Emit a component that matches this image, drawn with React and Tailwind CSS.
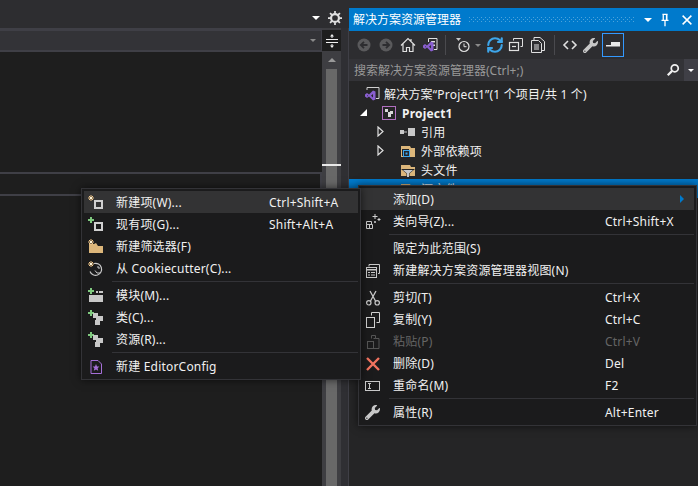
import { RefreshCw } from 'lucide-react'
import { FaWrench } from 'react-icons/fa'

const font = { fontFamily: '"Noto Sans", "Noto Sans CJK SC", sans-serif' }

function Icon({ children, className = '', size = 16 }) {
  return (
    <svg width={size} height={size} viewBox="0 0 16 16" fill="none" className={`shrink-0 ${className}`}>
      {children}
    </svg>
  )
}

const Spark = ({ x = 3, y = 3 }) => (
  <g stroke="#f0c78a" strokeWidth="1">
    <path d={`M${x} ${y - 3}v6M${x - 3} ${y}h6M${x - 2} ${y - 2}l4 4M${x + 2} ${y - 2}l-4 4`} />
    <rect x={x - 1} y={y - 1} width="2" height="2" fill="#fff3d6" stroke="none" />
  </g>
)
const Plus = () => <path d="M3 0v6M0 3h6" stroke="#7fc97f" strokeWidth="2" />
const Nodes = () => (
  <g fill="#c8c8c8">
    <rect x="5" y="3" width="5" height="5" />
    <rect x="10" y="6" width="5" height="5" />
    <rect x="7" y="10" width="5" height="5" />
    <rect x="8" y="7" width="3" height="4" />
  </g>
)

const icons = {
  newItem: (
    <Icon>
      <Spark />
      <rect x="7" y="6" width="7" height="7" stroke="#d0d0d0" strokeWidth="2" />
    </Icon>
  ),
  existing: (
    <Icon>
      <Plus />
      <rect x="7" y="6" width="7" height="7" stroke="#d0d0d0" strokeWidth="2" />
    </Icon>
  ),
  filter: (
    <Icon>
      <path d="M1 5h5l2-1 2 3h5v7H1z" fill="#dcb67a" />
      <Spark />
    </Icon>
  ),
  cookie: (
    <Icon>
      <path d="M6 2.500a6 6 0 1 1-4 8" stroke="#c8c8c8" strokeWidth="1.200" />
      <path d="M7 9.500l2 2.500h3M9 6h2v2" stroke="#c8c8c8" strokeWidth="1" />
      <Spark />
    </Icon>
  ),
  module: (
    <Icon>
      <Plus />
      <path d="M8 3h2v2H8zM11 3h4v2h-4zM1 7h14v7H1z" fill="#c8c8c8" />
    </Icon>
  ),
  cls: (
    <Icon>
      <Plus />
      <Nodes />
    </Icon>
  ),
  editorConfig: (
    <Icon>
      <path d="M3 1.500h7l3.500 3.500v9.500H3z" stroke="#a66fd8" strokeWidth="1" />
      <path d="M8 5l1 2.400 2.400.2-1.800 1.600.6 2.500L8 10.400l-2.200 1.300.6-2.500-1.800-1.600 2.400-.2z" fill="#a66fd8" />
    </Icon>
  ),
  wizard: (
    <Icon>
      <path d="M1.500 7.500h5v3h-5zM1.500 10.500h3v4h-3zM4.500 10.500h3v4h-3z" stroke="#c8c8c8" strokeWidth="1" />
      <path d="M10 0v5M7.500 2.500h5M14 4v3M12.500 5.500h3M10 7v2M9 8h2" stroke="#d0d0d0" strokeWidth="1" />
    </Icon>
  ),
  view: (
    <Icon>
      <path d="M4 3.500V1.500h10.500v9H13" stroke="#c8c8c8" strokeWidth="1" />
      <rect x="1.500" y="4.500" width="10" height="10" stroke="#c8c8c8" strokeWidth="1" />
      <path d="M2 6h9v1.500H2zM3 9h2v1H3zM6 9h4v1H6zM3 11.500h2v1H3zM6 11.500h4v1H6z" fill="#c8c8c8" />
    </Icon>
  ),
  cut: (
    <Icon>
      <path d="M11 1L5.500 11M5 1l5.500 10" stroke="#c8c8c8" strokeWidth="1.300" />
      <circle cx="3.800" cy="12.800" r="2.200" stroke="#c8c8c8" strokeWidth="1.200" />
      <circle cx="12.200" cy="12.800" r="2.200" stroke="#c8c8c8" strokeWidth="1.200" />
    </Icon>
  ),
  copy: (
    <Icon>
      <path d="M6.500 3.500V.5h8v10h-3" stroke="#d0d0d0" strokeWidth="1" />
      <rect x="1.500" y="5.500" width="8" height="10" stroke="#d0d0d0" strokeWidth="1" />
    </Icon>
  ),
  paste: (
    <Icon>
      <path d="M6.500 4.500v-3h4v3h-2M10.500 4.500h3.500v10H7.500" stroke="#555" strokeWidth="1" />
      <rect x="2.500" y="7.500" width="6" height="7" stroke="#555" strokeWidth="1" />
    </Icon>
  ),
  del: (
    <Icon>
      <path d="M2 2l12 12M14 2L2 14" stroke="#f1735f" strokeWidth="2.400" />
    </Icon>
  ),
  rename: (
    <Icon>
      <rect x=".5" y="3.500" width="14" height="9" stroke="#c8c8c8" strokeWidth="1" />
      <path d="M3 5.500h3M3 10.500h3M4.500 5.500v5" stroke="#c8c8c8" strokeWidth="1" />
    </Icon>
  ),
  wrench: <FaWrench size={15} color="#c8c8c8" />,
}

const rightMenu = [
  { label: '添加(D)', hover: true, sub: true },
  { label: '类向导(Z)...', icon: 'wizard', keys: 'Ctrl+Shift+X' },
  { sep: true },
  { label: '限定为此范围(S)' },
  { label: '新建解决方案资源管理器视图(N)', icon: 'view' },
  { sep: true },
  { label: '剪切(T)', icon: 'cut', keys: 'Ctrl+X' },
  { label: '复制(Y)', icon: 'copy', keys: 'Ctrl+C' },
  { label: '粘贴(P)', icon: 'paste', keys: 'Ctrl+V', disabled: true },
  { label: '删除(D)', icon: 'del', keys: 'Del' },
  { label: '重命名(M)', icon: 'rename', keys: 'F2' },
  { sep: true },
  { label: '属性(R)', icon: 'wrench', keys: 'Alt+Enter' },
]

const leftMenu = [
  { label: '新建项(W)...', icon: 'newItem', keys: 'Ctrl+Shift+A', hover: true },
  { label: '现有项(G)...', icon: 'existing', keys: 'Shift+Alt+A' },
  { label: '新建筛选器(F)', icon: 'filter' },
  { label: '从 Cookiecutter(C)...', icon: 'cookie' },
  { sep: true },
  { label: '模块(M)...', icon: 'module' },
  { label: '类(C)...', icon: 'cls' },
  { label: '资源(R)...', icon: 'cls' },
  { sep: true },
  { label: '新建 EditorConfig', icon: 'editorConfig' },
]

function Menu({ items, className, labelWidth }) {
  return (
    <div className={`absolute z-10 border border-[#333337] bg-[#1b1b1c] p-[2px] shadow-[0_0_8px_rgba(0,0,0,0.6)] ${className}`}>
      {items.map((item, i) =>
        item.sep ? (
          <div key={i} className="py-[2px] pl-[28px]">
            <div className="h-px bg-[#333337]" />
          </div>
        ) : (
          <div
            key={i}
            className={`flex h-[22px] items-center text-xs tracking-[0.2px] ${item.hover ? 'bg-[#333334]' : ''} ${item.disabled ? 'text-[#656565]' : 'text-[#f1f1f1]'}`}
          >
            <div className="flex w-[32px] shrink-0 pl-[4px] pt-[1px]">{item.icon && icons[item.icon]}</div>
            <div className={`shrink-0 whitespace-nowrap pt-[2px] ${labelWidth}`}>{item.label}</div>
            <div className="whitespace-nowrap pt-[2px]">{item.keys}</div>
            {item.sub && <div className="ml-auto mr-[10px] h-0 w-0 border-y-[4px] border-l-[4px] border-y-transparent border-l-[#007acc]" />}
          </div>
        ),
      )}
    </div>
  )
}

const Expander = ({ open }) =>
  open ? (
    <div className="h-0 w-0 border-b-[7px] border-l-[7px] border-b-white border-l-transparent" />
  ) : (
    <svg width="7" height="11" viewBox="0 0 7 11" fill="none">
      <path d="M1 1l5 4.500L1 10z" stroke="#e0e0e0" strokeWidth="1.200" />
    </svg>
  )

const vsLogo = (
  <path d="M1 8.500l2-1.500 2 1.500 4-4 2.500 1v8l-2.500 1-4-4-2 1.500-2-1.500zM3 9v1.500l1-.7zM9 8l-2 1.700L9 11.500z" fill="#8a5fd0" />
)

function Toolbar() {
  return (
    <div className="flex h-[28px] items-center pl-[7px] text-[#d8d8d8]">
      <Icon>
        <circle cx="8" cy="8" r="6.500" fill="#5a5a5c" />
        <path d="M11.500 8H5M8 4.800L4.800 8 8 11.200" stroke="#2d2d30" strokeWidth="1.800" />
      </Icon>
      <Icon className="ml-[6px]">
        <circle cx="8" cy="8" r="6.500" fill="#5a5a5c" />
        <path d="M4.500 8H11M8 4.800L11.200 8 8 11.200" stroke="#2d2d30" strokeWidth="1.800" />
      </Icon>
      <Icon className="ml-[6px]">
        <path d="M1 8.500L8 1.500l7 7M3 6.500v8h3.500v-4h3v4H13v-8M11 2v2.500" stroke="#e0e0e0" strokeWidth="1.200" />
      </Icon>
      <Icon className="ml-[6px]">
        <path d="M6.500 5V1.500h8.500v11H12" stroke="#e0e0e0" strokeWidth="1" />
        <path d="M9 4h4v1.500H9zM10 7.500h3V9h-3z" fill="#e0e0e0" />
        {vsLogo}
      </Icon>
      <div className="ml-[7px] mr-[9px] h-[20px] w-px bg-[#4a4a4e]" />
      <Icon>
        <path d="M1 1h5L3.500 4z" fill="#c8c8c8" />
        <circle cx="9" cy="9.500" r="5" stroke="#e0e0e0" strokeWidth="1.200" />
        <path d="M9 6.500v3.200h2.500" stroke="#e0e0e0" strokeWidth="1" />
      </Icon>
      <div className="ml-[4px] h-0 w-0 border-x-[3px] border-t-[3px] border-x-transparent border-t-[#8a8a8a]" />
      <RefreshCw size={18} strokeWidth={2.800} color="#3ea6ea" className="ml-[5px] shrink-0" />
      <Icon className="ml-[4px]">
        <path d="M5.500 3.500v-2h9v8h-2" stroke="#e0e0e0" strokeWidth="1" />
        <rect x="1.500" y="5.500" width="9" height="8" stroke="#e0e0e0" strokeWidth="1.200" />
        <path d="M4 9.500h4" stroke="#e0e0e0" strokeWidth="1.200" />
      </Icon>
      <Icon className="ml-[6px]">
        <path d="M4 3.500V.5h6l4.500 4v9H12" stroke="#e0e0e0" strokeWidth="1" />
        <path d="M1.500 3.500h7l3 3v9h-10z" stroke="#e0e0e0" strokeWidth="1" />
        <path d="M4 8h5M4 10h5M4 12h5" stroke="#e0e0e0" strokeWidth="1" />
      </Icon>
      <div className="ml-[8px] mr-[7px] h-[20px] w-px bg-[#4a4a4e]" />
      <Icon>
        <path d="M6 4L2 8l4 4M10 4l4 4-4 4" stroke="#e0e0e0" strokeWidth="1.600" />
      </Icon>
      <div className="ml-[5px] flex w-[16px] shrink-0">
        <FaWrench size={15} color="#c8c8c8" />
      </div>
      <div className="ml-[3px] flex h-[24px] w-[22px] flex-col justify-center border border-[#3399ff] px-[3px]">
        <svg width="14" height="6" viewBox="0 0 14 6">
          <path d="M5 0h9v3H5zM0 3h14v1.500H0z" fill="#e8e8e8" />
        </svg>
      </div>
    </div>
  )
}

function TreeRow({ pad, expander, icon, gap, selected, bold, children }) {
  return (
    <div className={`flex h-[19px] items-center whitespace-nowrap text-xs tracking-[0.2px] text-[#f1f1f1] ${pad} ${selected ? 'bg-[#007acc]' : ''} ${bold ? 'font-bold' : ''}`}>
      {expander}
      {icon}
      <span className={`pt-[2px] ${gap}`}>{children}</span>
    </div>
  )
}

const folder = (
  <Icon>
    <path d="M1 3h9l1 2h4v9H1z" fill="#dcb67a" />
    <path d="M2 6h7v7H2z" fill="#252526" />
    <rect x="3.500" y="7.500" width="6" height="6" stroke="#3ea6ea" strokeWidth="1" />
    <rect x="5.500" y="9.500" width="2" height="2" fill="#3ea6ea" />
  </Icon>
)
const headerFolder = (
  <Icon>
    <path d="M1 3h9l1 2h4v9H1z" fill="#dcb67a" />
    <path d="M1 7h14L9.500 11.500V16h-3v-4.500z" fill="#252526" />
    <path d="M3 8h10L9 11.500V15H7v-3.500z" fill="#c8c8c8" />
  </Icon>
)

function SolutionPanel() {
  return (
    <div className="flex min-w-0 flex-1 flex-col pt-[8px]">
      <div className="flex h-[23px] items-center bg-[#007acc] pl-[4px] pr-[9px] text-xs text-white">
        <span className="whitespace-nowrap">解决方案资源管理器</span>
        <svg width="166" height="6" className="ml-[8px] shrink-0">
          <defs>
            <pattern id="grip" width="4" height="4" patternUnits="userSpaceOnUse">
              <rect width="1" height="1" fill="#4da3dc" />
              <rect x="2" y="2" width="1" height="1" fill="#4da3dc" />
            </pattern>
          </defs>
          <rect width="166" height="6" fill="url(#grip)" />
        </svg>
        <div className="ml-[9px] h-0 w-0 border-x-[4px] border-t-[4px] border-x-transparent border-t-white" />
        <Icon className="ml-[6px]" size={14}>
          <path d="M5 1.500h6M6 2v6M10 2v6M4 8.500h8M8 9v6" stroke="#fff" strokeWidth="1.500" />
          <rect x="9" y="2" width="1.500" height="6" fill="#fff" />
        </Icon>
        <Icon className="ml-[8px]" size={14}>
          <path d="M3 3l10 10M13 3L3 13" stroke="#fff" strokeWidth="1.700" />
        </Icon>
      </div>
      <Toolbar />
      <div className="flex h-[22px] items-center bg-[#333337] pl-[5px] text-xs text-[#999999]">
        <span className="whitespace-nowrap pt-[2px]">搜索解决方案资源管理器(Ctrl+;)</span>
        <Icon className="ml-auto mr-[4px]" size={14}>
          <circle cx="10" cy="6" r="4" stroke="#f1f1f1" strokeWidth="2" />
          <path d="M7 9l-5 5" stroke="#f1f1f1" strokeWidth="2.500" />
        </Icon>
        <div className="flex h-full w-[14px] items-center justify-center bg-[#3f3f46]">
          <div className="h-0 w-0 border-x-[3px] border-t-[3px] border-x-transparent border-t-white" />
        </div>
      </div>
      <div className="flex-1 bg-[#252526] pt-[3px]">
        <TreeRow
          pad="pl-[15px]"
          gap="ml-[4px]"
          icon={
            <Icon>
              <path d="M3 4V1.500h12v11H12" stroke="#d0d0d0" strokeWidth="1" />
              {vsLogo}
            </Icon>
          }
        >
          解决方案“Project1”(1 个项目/共 1 个)
        </TreeRow>
        <TreeRow
          pad="pl-[11px]"
          gap="ml-[5px]"
          bold
          expander={
            <div className="w-[21px]">
              <Expander open />
            </div>
          }
          icon={
            <Icon>
              <rect x="1.500" y="1.500" width="13" height="13" stroke="#b06fc0" strokeWidth="1" />
              <path d="M4 4h3v3H4zM7 7h2v2H7zM9 6h3v3H9zM7 9h3v3H7z" fill="#d8d8d8" />
            </Icon>
          }
        >
          Project1
        </TreeRow>
        <TreeRow
          pad="pl-[28px]"
          gap="ml-[5px]"
          expander={
            <div className="flex w-[23px]">
              <Expander />
            </div>
          }
          icon={
            <Icon>
              <path d="M0 6h4v4H0zM4 7.500h3v1H4zM8 4h7v8H8z" fill="#c8c8c8" />
            </Icon>
          }
        >
          引用
        </TreeRow>
        <TreeRow
          pad="pl-[28px]"
          gap="ml-[5px]"
          expander={
            <div className="flex w-[23px]">
              <Expander />
            </div>
          }
          icon={folder}
        >
          外部依赖项
        </TreeRow>
        <TreeRow pad="pl-[51px]" gap="ml-[5px]" icon={headerFolder}>
          头文件
        </TreeRow>
        <TreeRow pad="pl-[51px]" gap="ml-[5px]" selected icon={headerFolder}>
          源文件
        </TreeRow>
      </div>
    </div>
  )
}

export default function App() {
  return (
    <div className="relative flex h-[486px] w-[698px] overflow-hidden bg-[#2d2d30]" style={font}>
      <div className="flex w-[349px] shrink-0 flex-col">
        <div className="flex h-[28px] items-center justify-end pr-[7px] pt-[8px]">
          <div className="h-0 w-0 border-x-[4px] border-t-[4px] border-x-transparent border-t-white" />
          <Icon className="ml-[8px]" size={14}>
            <circle cx="8" cy="8" r="4.500" stroke="#e0e0e0" strokeWidth="2.500" />
            <path d="M8 0v3M8 13v3M0 8h3M13 8h3M2.300 2.300l2.200 2.200M11.500 11.500l2.200 2.200M13.700 2.300l-2.200 2.200M4.500 11.500l-2.200 2.200" stroke="#e0e0e0" strokeWidth="2" />
          </Icon>
        </div>
        <div className="flex flex-1">
          <div className="flex w-[322px] shrink-0 flex-col bg-[#1e1e1e]">
            <div className="flex h-[24px] items-center justify-end border-y-[2px] border-r border-t-[3px] border-[#3f3f46] bg-[#333337] pr-[5px]">
              <div className="h-0 w-0 border-x-[3px] border-t-[3px] border-x-transparent border-t-[#8a8a8a]" />
            </div>
            <div className="h-[120px]" />
            <div className="h-[24px] border-y-[2px] border-r-[2px] border-[#3f3f46]" />
          </div>
          <div className="relative flex w-[19px] shrink-0 flex-col bg-[#3e3e42]">
            <div className="mt-[2px] flex h-[21px] items-center justify-center bg-[#1e1e1e]">
              <svg width="12" height="14" viewBox="0 0 12 14" fill="none">
                <path d="M0 5.500h12M0 8.500h12" stroke="#f1f1f1" strokeWidth="1" />
                <path d="M6 0l2 2.500H4zM6 14l2-2.500H4z" fill="#f1f1f1" />
                <path d="M6 2v2M6 10v2" stroke="#f1f1f1" strokeWidth="1" />
              </svg>
            </div>
            <div className="flex h-[18px] items-center justify-center">
              <div className="h-0 w-0 border-x-[4px] border-b-[4px] border-x-transparent border-b-[#999999]" />
            </div>
            <div className="mx-[4px] flex-1 bg-[#686868]" />
            <div className="absolute left-0 right-0 top-[136px] h-[2px] bg-[#e8e8e8]" />
          </div>
          <div className="flex-1 border-r border-[#3f3f46] bg-[#2f2f33]" />
        </div>
      </div>
      <SolutionPanel />
      <Menu items={rightMenu} className="left-[358px] top-[185px] w-[339px]" labelWidth="w-[212px]" />
      <Menu items={leftMenu} className="left-[81px] top-[188px] w-[280px]" labelWidth="w-[153px]" />
    </div>
  )
}
